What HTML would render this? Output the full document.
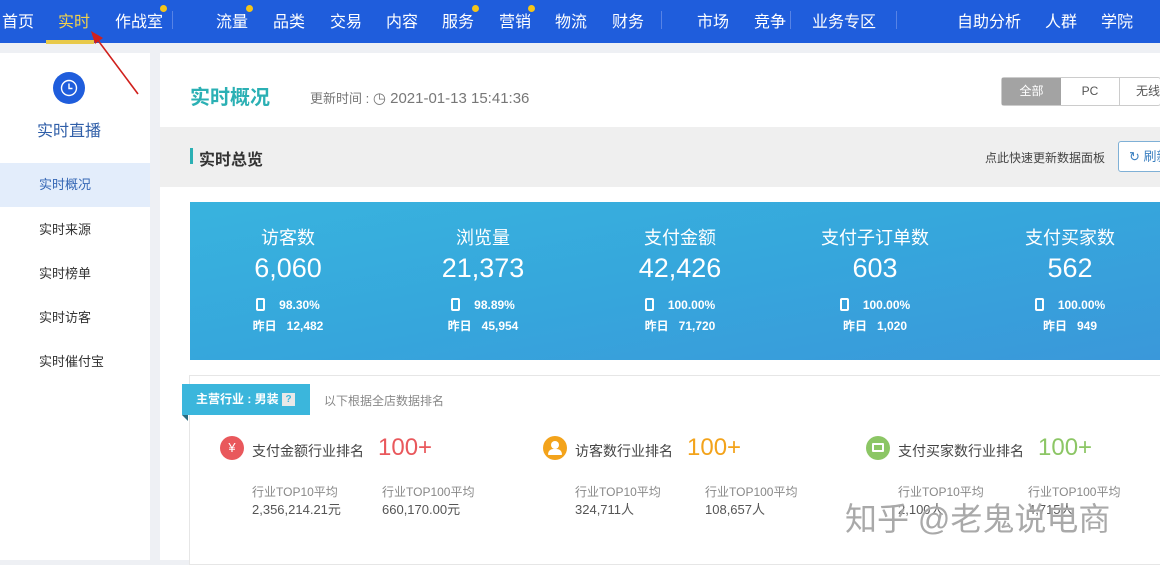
<!DOCTYPE html>
<html><head><meta charset="utf-8"><style>
*{margin:0;padding:0;box-sizing:border-box}
body{width:1160px;height:560px;overflow:hidden;background:#eef0f4;font-family:"Liberation Sans","Noto Sans CJK SC",sans-serif;position:relative}
.a{position:absolute;white-space:nowrap}
.nav{position:absolute;left:0;top:0;width:1160px;height:43px;background:#1f5ddc}
.nav .a{color:#fff;font-size:16px;top:8px}
.dot{position:absolute;width:7px;height:7px;border-radius:50%;background:#f5c518;top:5px}
.div{position:absolute;top:11px;width:1px;height:18px;background:#5783e6}
.side{position:absolute;left:0;top:53px;width:150px;height:507px;background:#fff}
.si{position:absolute;left:0;width:150px;height:44px;font-size:13px;color:#333;padding-left:39px;line-height:44px}
.main{position:absolute;left:160px;top:53px;width:1000px;height:507px;background:#fff}
.panel{position:absolute;left:190px;top:202px;width:970px;height:158px;background:linear-gradient(170deg,#38b3de 0%,#36a6dc 50%,#3a98da 100%)}
.col{position:absolute;top:0;width:196px;color:#fff;text-align:center}
.col .t{font-size:18px;margin-top:24px;line-height:24px}
.col .n{font-size:27px;line-height:36px}
.col .r{font-size:12px;font-weight:bold;line-height:21px;margin-top:9px}
.ph{display:inline-block;width:9px;height:13px;border:2px solid #fff;border-radius:2px;vertical-align:-2px;margin-right:14px}
</style></head><body>
<div class="nav">
<span class="a" style="left:2px">首页</span>
<span class="a" style="left:58px;color:#f2d24b">实时</span>
<div style="position:absolute;left:46px;top:40px;width:48px;height:4px;background:#e8c94a"></div>
<span class="a" style="left:115px">作战室</span><i class="dot" style="left:160px"></i>
<i class="div" style="left:172px"></i>
<span class="a" style="left:216px">流量</span><i class="dot" style="left:246px"></i>
<span class="a" style="left:273px">品类</span>
<span class="a" style="left:330px">交易</span>
<span class="a" style="left:386px">内容</span>
<span class="a" style="left:442px">服务</span><i class="dot" style="left:472px"></i>
<span class="a" style="left:499px">营销</span><i class="dot" style="left:528px"></i>
<span class="a" style="left:555px">物流</span>
<span class="a" style="left:612px">财务</span>
<i class="div" style="left:661px"></i>
<span class="a" style="left:697px">市场</span>
<span class="a" style="left:754px">竞争</span>
<i class="div" style="left:790px"></i>
<span class="a" style="left:812px">业务专区</span>
<i class="div" style="left:896px"></i>
<span class="a" style="left:957px">自助分析</span>
<span class="a" style="left:1045px">人群</span>
<span class="a" style="left:1101px">学院</span>
</div>
<div class="side">
<div style="position:absolute;left:53px;top:19px;width:32px;height:32px;border-radius:50%;background:#1f5ddc"></div>
<svg class="a" style="left:59px;top:25px" width="20" height="20"><circle cx="10" cy="10" r="7.5" fill="none" stroke="#fff" stroke-width="1.4"/><path d="M10 5.5V10.5H13.5" fill="none" stroke="#fff" stroke-width="1.4"/></svg>
<span class="a" style="left:37px;top:64px;font-size:16px;color:#2f5ea8">实时直播</span>
<div class="si" style="top:110px;background:#e3edfb;color:#3567b5">实时概况</div>
<div class="si" style="top:155px">实时来源</div>
<div class="si" style="top:199px">实时榜单</div>
<div class="si" style="top:243px">实时访客</div>
<div class="si" style="top:287px">实时催付宝</div>
</div>
<div class="main"></div>
<svg class="a" style="left:88px;top:30px;z-index:5" width="52" height="66"><line x1="50" y1="64" x2="6" y2="5" stroke="#d0201c" stroke-width="1.6"/><polygon points="3,1 15,8 7,14" fill="#d0201c"/></svg>
<span class="a" style="left:190px;top:81px;font-size:20px;font-weight:bold;color:#2bb0b4">实时概况</span>
<span class="a" style="left:310px;top:88px;font-size:13px;color:#777">更新时间 : <span style="font-size:15px">◷ 2021-01-13 15:41:36</span></span>
<div class="a" style="left:1001px;top:77px;width:160px;height:29px;border:1px solid #ccc;border-radius:3px;font-size:12px;color:#555">
<div class="a" style="left:0;top:0;width:59px;height:27px;background:#a3a3a3;color:#fff;text-align:center;line-height:27px">全部</div>
<div class="a" style="left:59px;top:0;width:59px;height:27px;text-align:center;line-height:27px;border-right:1px solid #ccc">PC</div>
<div class="a" style="left:134px;top:0;line-height:27px">无线</div></div>
<div class="a" style="left:160px;top:127px;width:1000px;height:60px;background:#efefef"></div>
<div class="a" style="left:190px;top:148px;width:3px;height:16px;background:#2bb0b4"></div>
<span class="a" style="left:199px;top:146px;font-size:16px;font-weight:bold;color:#333">实时总览</span>
<span class="a" style="left:985px;top:149px;font-size:12px;color:#444">点此快速更新数据面板</span>
<div class="a" style="left:1118px;top:141px;width:50px;height:31px;border:1px solid #7fb0d6;border-radius:3px;background:#fff;color:#3a7fc0;font-size:13px;line-height:29px;padding-left:10px">↻ 刷新</div>
<div class="panel">
<div class="col" style="left:0"><div class="t">访客数</div><div class="n">6,060</div><div class="r"><i class="ph"></i>98.30%<br>昨日 &nbsp; 12,482</div></div>
<div class="col" style="left:195px"><div class="t">浏览量</div><div class="n">21,373</div><div class="r"><i class="ph"></i>98.89%<br>昨日 &nbsp; 45,954</div></div>
<div class="col" style="left:392px"><div class="t">支付金额</div><div class="n">42,426</div><div class="r"><i class="ph"></i>100.00%<br>昨日 &nbsp; 71,720</div></div>
<div class="col" style="left:587px"><div class="t">支付子订单数</div><div class="n">603</div><div class="r"><i class="ph"></i>100.00%<br>昨日 &nbsp; 1,020</div></div>
<div class="col" style="left:782px"><div class="t">支付买家数</div><div class="n">562</div><div class="r"><i class="ph"></i>100.00%<br>昨日 &nbsp; 949</div></div>
</div>
<div class="a" style="left:189px;top:375px;width:980px;height:190px;border:1px solid #e6e6e6;background:#fff"></div>
<div class="a" style="left:182px;top:384px;width:128px;height:31px;background:#3bb6dc;color:#fff;font-size:12px;font-weight:bold;line-height:31px;padding-left:14px">主营行业 : 男装 <span style="display:inline-block;width:13px;height:13px;background:#e8e8e8;color:#3bb6dc;font-size:10px;text-align:center;line-height:13px;vertical-align:middle">?</span></div>
<div class="a" style="left:182px;top:415px;border-top:6px solid #2a6b80;border-left:6px solid transparent;width:0;height:0"></div>
<span class="a" style="left:324px;top:392px;font-size:12px;color:#888">以下根据全店数据排名</span>
<div class="a" style="left:220px;top:436px;width:24px;height:24px;border-radius:50%;background:#e9585c;color:#fff;font-size:13px;text-align:center;line-height:24px">¥</div>
<span class="a" style="left:252px;top:441px;font-size:14px;color:#444">支付金额行业排名</span>
<span class="a" style="left:378px;top:434px;font-size:24px;color:#e9585c">100+</span>
<div class="a" style="left:543px;top:436px;width:24px;height:24px;border-radius:50%;background:#f3a31b"></div>
<div class="a" style="left:551px;top:441px;width:8px;height:8px;border-radius:50%;background:#fff"></div>
<div class="a" style="left:548px;top:449px;width:14px;height:6px;border-radius:6px 6px 1px 1px;background:#fff"></div>
<span class="a" style="left:575px;top:441px;font-size:14px;color:#444">访客数行业排名</span>
<span class="a" style="left:687px;top:434px;font-size:24px;color:#f3a31b">100+</span>
<div class="a" style="left:866px;top:436px;width:24px;height:24px;border-radius:50%;background:#8cc665"></div>
<div class="a" style="left:872px;top:443px;width:12px;height:9px;border:2px solid #fff;border-radius:1px"></div>
<span class="a" style="left:898px;top:441px;font-size:14px;color:#444">支付买家数行业排名</span>
<span class="a" style="left:1038px;top:434px;font-size:24px;color:#8cc665">100+</span>
<div class="a" style="left:252px;top:484px;font-size:12px;color:#888;line-height:17px">行业TOP10平均<br><span style="color:#555;font-size:13px">2,356,214.21元</span></div>
<div class="a" style="left:382px;top:484px;font-size:12px;color:#888;line-height:17px">行业TOP100平均<br><span style="color:#555;font-size:13px">660,170.00元</span></div>
<div class="a" style="left:575px;top:484px;font-size:12px;color:#888;line-height:17px">行业TOP10平均<br><span style="color:#555;font-size:13px">324,711人</span></div>
<div class="a" style="left:705px;top:484px;font-size:12px;color:#888;line-height:17px">行业TOP100平均<br><span style="color:#555;font-size:13px">108,657人</span></div>
<div class="a" style="left:898px;top:484px;font-size:12px;color:#888;line-height:17px">行业TOP10平均<br><span style="color:#555;font-size:13px">2,100人</span></div>
<div class="a" style="left:1028px;top:484px;font-size:12px;color:#888;line-height:17px">行业TOP100平均<br><span style="color:#555;font-size:13px">4,715人</span></div>
<span class="a" style="left:845px;top:494px;font-size:32px;color:rgba(140,140,140,.75);text-shadow:0 0 1px #fff">知乎 @老鬼说电商</span>
</body></html>
